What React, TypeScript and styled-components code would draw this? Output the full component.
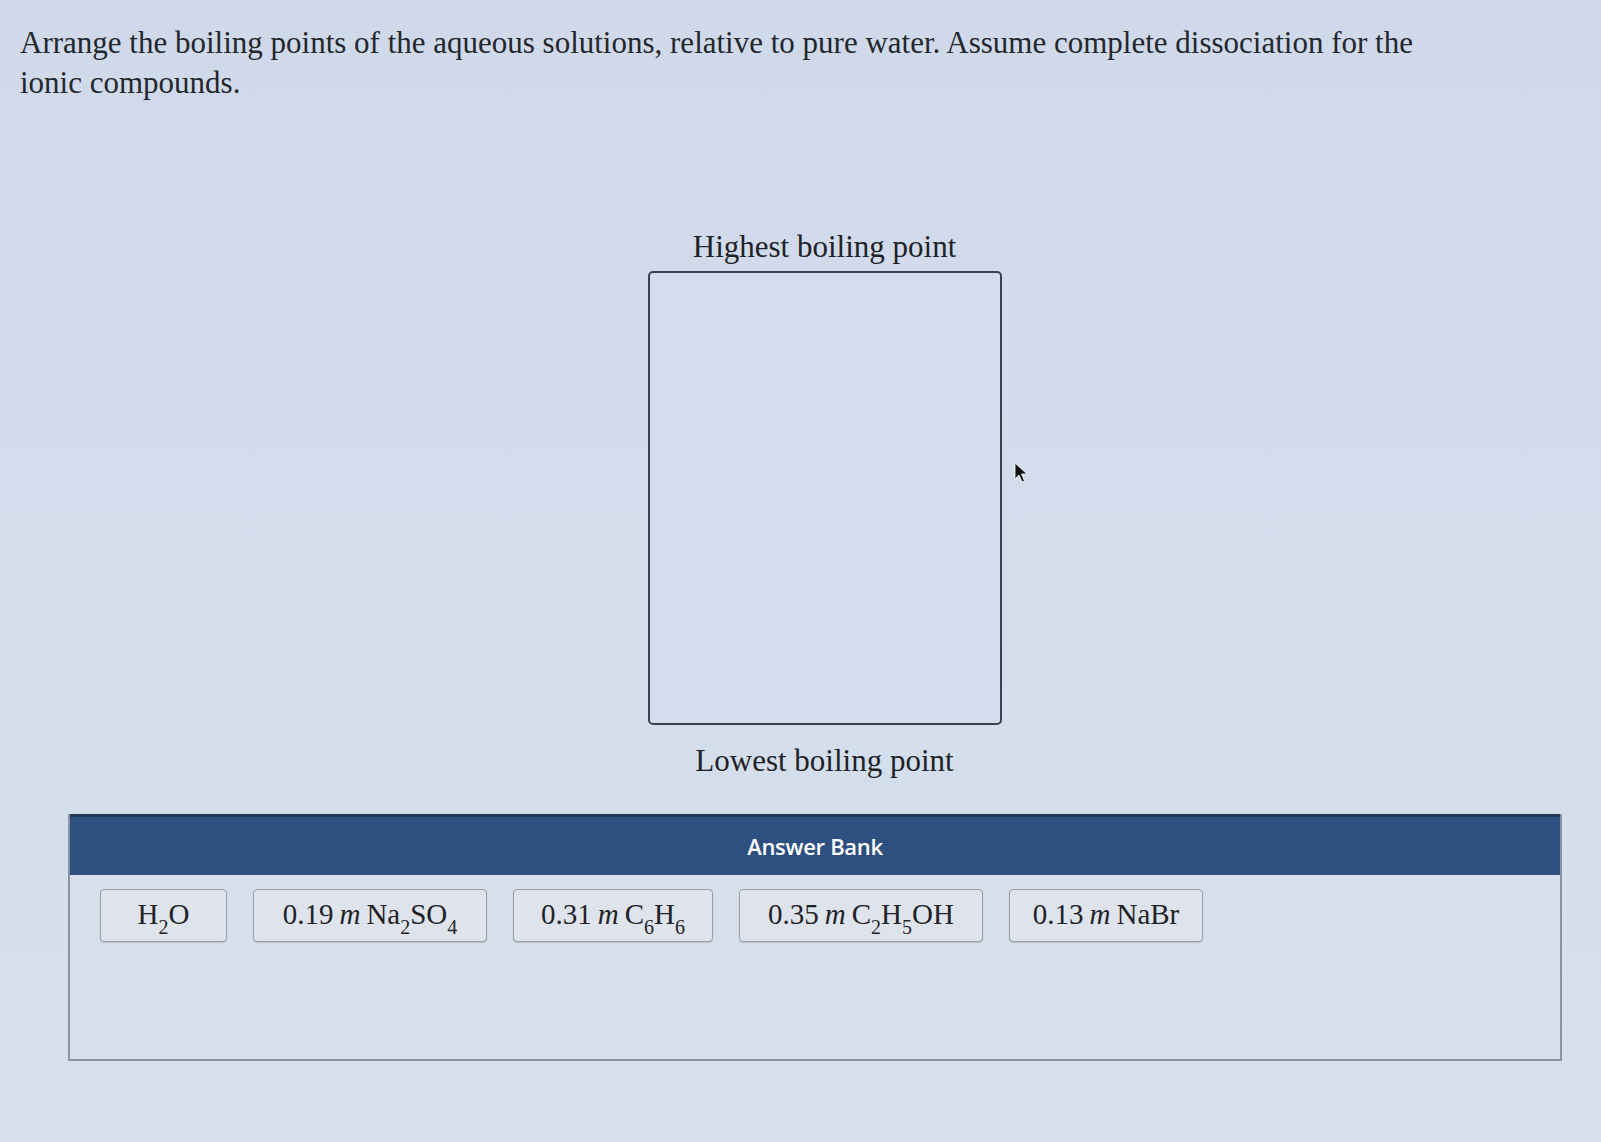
import React from 'react';
import styled, { createGlobalStyle } from 'styled-components';

const GlobalStyle = createGlobalStyle`
	html, body {
		margin: 0;
		padding: 0;
	}
	body {
		background: linear-gradient(180deg, #cfd9ea 0%, #d3ddec 50%, #d6e1eb 100%);
		font-family: 'Liberation Serif', 'Times New Roman', serif;
		color: #1f2227;
	}
`;

const Page = styled.div`
	position: relative;
	width: 1601px;
	height: 1142px;
	overflow: hidden;
`;

const Prompt = styled.p`
	margin: 0;
	padding: 23px 150px 0 20px;
	font-size: 31px;
	line-height: 40px;
	color: #24272c;
`;

const SortArea = styled.div`
	display: flex;
	flex-direction: column;
	align-items: center;
	padding-left: 48px;
	margin-top: 126px;
`;

const EndLabel = styled.div`
	font-size: 31px;
	line-height: 36px;
	color: #1f2227;
`;

const DropBox = styled.div`
	width: 354px;
	height: 454px;
	margin: 6px 0 18px;
	border: 2px solid #3a4250;
	border-radius: 5px;
	box-sizing: border-box;
	background: #d4dded;
`;

const Bank = styled.section`
	margin: 35px 39px 0 68px;
	border: 2px solid #8d939c;
	border-top: none;
	background: #d6dfeb;
`;

const BankHeader = styled.div`
	height: 61px;
	display: flex;
	align-items: center;
	justify-content: center;
	background: #2e5080;
	border-top: 3px solid #22385a;
	box-sizing: border-box;
	color: #ffffff;
	font-family: 'Open Sans', 'Liberation Sans', sans-serif;
	font-size: 22px;
	font-weight: 600;
	letter-spacing: -0.3px;
`;

const BankBody = styled.div`
	height: 184px;
	box-sizing: border-box;
	padding: 14px 30px;
	display: flex;
	align-items: flex-start;
	gap: 26px;
`;

const Chip = styled.div<{ $width: number }>`
	width: ${(p) => p.$width}px;
	height: 53px;
	box-sizing: border-box;
	display: flex;
	align-items: center;
	justify-content: center;
	padding-bottom: 2px;
	border: 1.5px solid #9aa0a8;
	border-radius: 4px;
	background: #dfe4ec;
	box-shadow: 0 1px 1px rgba(0, 0, 0, 0.12);
	font-size: 29px;
	color: #1f2227;
	white-space: nowrap;
`;

const Molal = styled.i`
	margin: 0 6px;
`;

const Sub = styled.sub`
	font-size: 20px;
	vertical-align: -10px;
	line-height: 0;
`;

const Pointer = styled.svg`
	position: absolute;
	left: 1013px;
	top: 462px;
`;

type Part = string | { sub: string };

interface ChipData {
	conc?: string;
	formula: Part[];
	width: number;
}

const chips: ChipData[] = [
	{ formula: ['H', { sub: '2' }, 'O'], width: 127 },
	{ conc: '0.19', formula: ['Na', { sub: '2' }, 'SO', { sub: '4' }], width: 234 },
	{ conc: '0.31', formula: ['C', { sub: '6' }, 'H', { sub: '6' }], width: 200 },
	{ conc: '0.35', formula: ['C', { sub: '2' }, 'H', { sub: '5' }, 'OH'], width: 244 },
	{ conc: '0.13', formula: ['NaBr'], width: 194 }
];

const Formula = ({ parts }: { parts: Part[] }) => (
	<span>
		{parts.map((p, i) => (typeof p === 'string' ? <span key={i}>{p}</span> : <Sub key={i}>{p.sub}</Sub>))}
	</span>
);

const App = () => {
	return (
		<Page>
			<GlobalStyle />
			<Prompt>
				Arrange the boiling points of the aqueous solutions, relative to pure water. Assume complete dissociation for the ionic compounds.
			</Prompt>

			<SortArea>
				<EndLabel>Highest boiling point</EndLabel>
				<DropBox />
				<EndLabel>Lowest boiling point</EndLabel>
			</SortArea>

			<Bank>
				<BankHeader>Answer Bank</BankHeader>
				<BankBody>
					{chips.map((c, i) => (
						<Chip key={i} $width={c.width}>
							{c.conc && (
								<>
									{c.conc}
									<Molal>m</Molal>
								</>
							)}
							<Formula parts={c.formula} />
						</Chip>
					))}
				</BankBody>
			</Bank>

			{/* mouse pointer */}
			<Pointer width="16" height="22" viewBox="0 0 16 22">
				<path d="M2 1 L2 17 L6 13 L9 20 L11.5 19 L8.5 12 L14 12 Z" fill="#111" stroke="#fff" strokeWidth="0.8" />
			</Pointer>
		</Page>
	);
};

export default App;
